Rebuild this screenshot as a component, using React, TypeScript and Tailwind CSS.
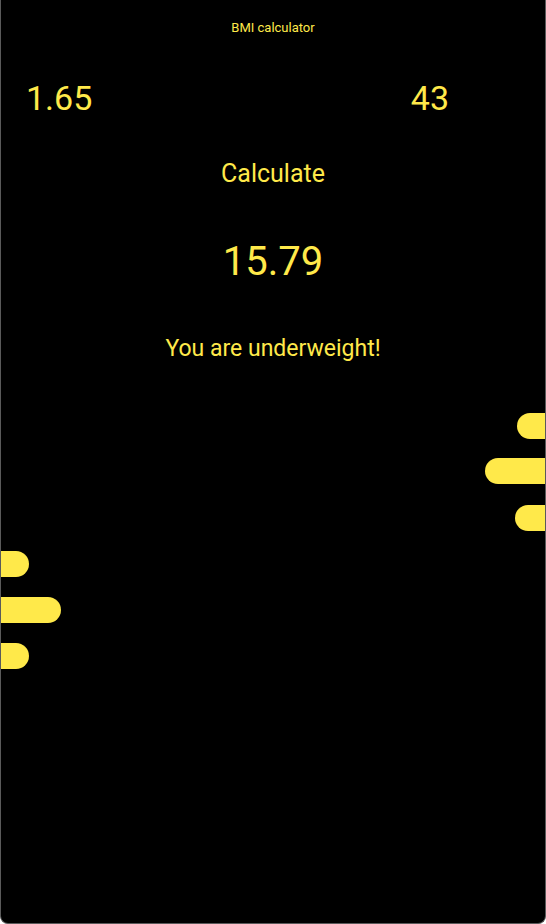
const YELLOW = 'bg-[#ffe94a]'

function Pill({ width, side }: { width: number; side: 'left' | 'right' }) {
  return (
    <div
      className={`${YELLOW} h-[26px] ${side === 'right' ? 'rounded-l-full' : 'rounded-r-full'}`}
      style={{ width }}
    />
  )
}

export default function App() {
  return (
    <div
      className="w-[546px] h-[924px] bg-black border-x border-b border-[#5a5a5a] rounded-b-[8px] overflow-hidden flex flex-col text-[#ffe94a]"
      style={{ fontFamily: 'Roboto, "Noto Sans", sans-serif' }}
    >
      <div className="h-[56px] flex items-center justify-center text-[13px]">BMI calculator</div>

      <div className="h-[84px] flex items-center text-[34px]">
        <span className="pl-[25px]">1.65</span>
        <span className="ml-auto mr-[96px]">43</span>
      </div>

      <div className="h-[68px] flex items-center justify-center text-[25px]">Calculate</div>

      <div className="h-[108px] flex items-center justify-center text-[40px]">15.79</div>

      <div className="h-[66px] flex items-center justify-center text-[23px]">You are underweight!</div>

      <div className="mt-[31px] flex flex-col items-end">
        <Pill width={28} side="right" />
        <div className="mt-[19px]">
          <Pill width={60} side="right" />
        </div>
        <div className="mt-[21px]">
          <Pill width={30} side="right" />
        </div>
      </div>

      <div className="mt-[20px] flex flex-col items-start">
        <Pill width={28} side="left" />
        <div className="mt-[20px]">
          <Pill width={60} side="left" />
        </div>
        <div className="mt-[20px]">
          <Pill width={28} side="left" />
        </div>
      </div>
    </div>
  )
}
